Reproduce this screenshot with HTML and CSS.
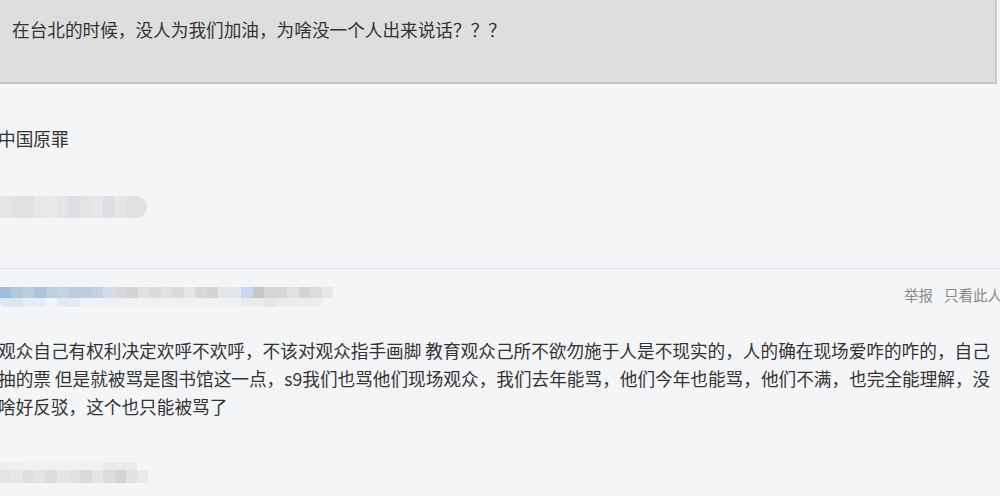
FILE: index.html
```html
<!DOCTYPE html>
<html lang="zh-CN">
<head>
<meta charset="utf-8">
<title>帖子</title>
<link rel="stylesheet" href="styles.css">
</head>
<body>
<div class="quote">
  <p class="quote-text">在台北的时候，没人为我们加油，为啥没一个人出来说话？？？</p>
</div>
<section class="post post-first">
  <div class="post-body">
    <p class="post-text first-text">中国原罪</p>
    <div class="blur-pill"></div>
  </div>
</section>
<section class="post post-second">
  <div class="post-body">
    <div class="post-head">
      <div class="blur-name">
        <div class="blur-row1"></div>
        <div class="blur-row2"></div>
      </div>
      <div class="actions">
        <span class="action">举报</span>
        <span class="action">只看此人</span>
      </div>
    </div>
    <p class="post-text second-text">观众自己有权利决定欢呼不欢呼，不该对观众指手画脚 教育观众己所不欲勿施于人是不现实的，人的确在现场爱咋的咋的，自己<br>抽的票 但是就被骂是图书馆这一点，s9我们也骂他们现场观众，我们去年能骂，他们今年也能骂，他们不满，也完全能理解，没<br>啥好反驳，这个也只能被骂了</p>
    <div class="blur-tail">
      <div class="tail-row1"></div>
      <div class="tail-row2"></div>
    </div>
  </div>
</section>
</body>
</html>
```

FILE: styles.css
```css
html, body {
  margin: 0;
  padding: 0;
}
body {
  width: 1000px;
  height: 496px;
  overflow: hidden;
  background: #f4f5f7;
  font-family: "Microsoft YaHei", "Noto Sans CJK SC", "Noto Sans", sans-serif;
  color: #333333;
}
p {
  margin: 0;
}
.quote {
  box-sizing: border-box;
  width: 997px;
  height: 84px;
  background: #dedede;
  border-right: 2px solid #c8c8c8;
  border-bottom: 2px solid #c8c8c8;
  padding: 16px 12px 0 12px;
}
.quote-text {
  font-size: 17.65px;
  line-height: 28px;
  color: #333333;
}
.post {
  width: 1000px;
}
.post-body {
  margin-left: -2px;
  width: 1004px;
}
.post-first {
  padding-top: 41px;
  padding-bottom: 50px;
  border-bottom: 1px solid #dde4ef;
}
.post-text {
  font-size: 17.65px;
  line-height: 28px;
  color: #333333;
  white-space: nowrap;
}
.blur-pill {
  margin-top: 43px;
  margin-left: 2px;
  width: 147px;
  height: 22px;
  border-radius: 0 11px 11px 0;
  background: linear-gradient(to right,
    #e5e6e8 0 11px, #e1e2e4 11px 22px, #dfe0e2 22px 34px, #e6e7e9 34px 45px,
    #e8e9eb 45px 57px, #e3e4e6 57px 68px, #dedfe2 68px 80px, #e2e3e5 80px 91px,
    #e6e7e9 91px 103px, #dddee1 103px 114px, #e5e6e8 114px 126px, #e0e1e3 126px 147px);
}
.post-head {
  margin-top: 12px;
  display: flex;
  align-items: flex-start;
  height: 28px;
}
.blur-name {
  margin-top: 6px;
  margin-left: 2px;
  width: 333px;
}
.blur-row1 {
  height: 11px;
  background: linear-gradient(to right,
    #9fbcdb 0 11.5px, #b4c8dc 11.5px 23px, #b8cfe0 23px 34.5px, #adc3dc 34.5px 46px,
    #b9d0e3 46px 57.5px, #c6d3e1 57.5px 69px, #b9cde0 69px 80.5px, #b8cde0 80.5px 92px,
    #c0d1e1 92px 103.5px, #d2dde7 103.5px 115px, #d8d8d8 115px 126.5px, #d4d4d4 126.5px 138px,
    #e0e1e2 138px 149.5px, #dbdbdb 149.5px 161px, #e1e1e1 161px 172.5px, #dbdbdb 172.5px 184px,
    #e6e6e6 184px 195.5px, #d9d9d9 195.5px 207px, #d4d4d4 207px 218.5px, #e3e5e8 218.5px 230px,
    #e1e8f2 230px 241.5px, #c9d6ee 241.5px 253px, #c6c6c6 253px 264.5px, #d3d6d8 264.5px 276px,
    #d6d6d6 276px 287.5px, #dfe0e1 287.5px 299px, #d3d3d3 299px 310.5px, #dcdcdc 310.5px 322px,
    #e6e8ec 322px 333px);
}
.blur-row2 {
  height: 9px;
  width: 322px;
  border-radius: 0 0 6px 6px;
  background: linear-gradient(to right,
    #dce6f0 0 23px, #e6edf5 23px 46px, #f2f4f6 46px 57px, #e3eaf2 57px 80px,
    #eff1f4 80px 241px, #ebebec 241px 265px, #e6e6e7 265px 276px, #ececed 276px 322px);
}
.actions {
  margin-left: auto;
  display: flex;
  gap: 11px;
  font-size: 14.5px;
  line-height: 28px;
  color: #888888;
}
.second-text {
  margin-top: 28px;
}
.blur-tail {
  margin-top: 41px;
  margin-left: 2px;
  width: 148px;
}
.tail-row1 {
  height: 8px;
  width: 137px;
  background: linear-gradient(to right,
    #eeeff1 0 23px, #f0f1f3 23px 103px, #eaebed 103px 137px);
}
.tail-row2 {
  height: 13px;
  background: linear-gradient(to right,
    #e3e3e4 0 11px, #e8e8e9 11px 23px, #dedede 23px 34px, #e4e4e5 34px 46px,
    #dcdcdd 46px 57px, #e6e6e7 57px 69px, #e1e1e2 69px 80px, #dadadb 80px 92px,
    #e5e5e6 92px 103px, #dcdcdd 103px 115px, #d5d5d6 115px 126px, #e2e2e3 126px 137px,
    #eaeaeb 137px 148px);
}
```
